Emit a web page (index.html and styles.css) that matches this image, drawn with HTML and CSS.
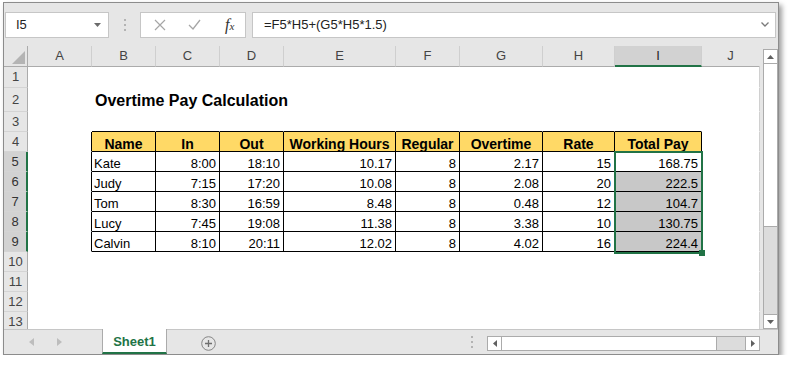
FILE: index.html
```html
<!DOCTYPE html>
<html>
	<head>
		<meta charset="utf-8">
		<title>Overtime Pay Calculation</title>
		<link rel="stylesheet" href="styles.css">
	</head>
	<body>
	<div class="window">
		<!-- 名称框 + 编辑栏 -->
		<div class="fbar">
			<div class="namebox">
				<span>I5</span>
				<svg class="caret" width="7" height="4" viewBox="0 0 7 4"><polygon points="0,0 7,0 3.5,4" fill="#6b6b6b"/></svg>
			</div>
			<div class="grip"><i></i><i></i><i></i></div>
			<div class="fbtns">
				<svg width="12" height="12" viewBox="0 0 12 12"><path d="M1 1 L11 11 M11 1 L1 11" stroke="#a6a6a6" stroke-width="1.2" fill="none"/></svg>
				<svg width="13" height="11" viewBox="0 0 13 11"><path d="M1 6 L5 10 L12 1" stroke="#a6a6a6" stroke-width="1.3" fill="none"/></svg>
				<span class="fx">f<small>x</small></span>
			</div>
			<div class="formula">
				<span>=F5*H5+(G5*H5*1.5)</span>
				<svg class="chev" width="8" height="5" viewBox="0 0 8 5"><path d="M0.5 0.5 L4 4 L7.5 0.5" stroke="#7a7a7a" stroke-width="1.3" fill="none"/></svg>
			</div>
		</div>

		<div class="main">
			<div class="sheet">
				<div class="row hdr">
					<div class="corner"><svg width="13" height="13" viewBox="0 0 13 13"><polygon points="13,0 13,13 0,13" fill="#b4b4b4"/></svg></div>
					<div>A</div><div>B</div><div>C</div><div>D</div><div>E</div><div>F</div><div>G</div><div>H</div><div class="on">I</div><div>J</div>
				</div>
				<div class="row r1"><div class="rh">1</div><div></div><div></div><div></div><div></div><div></div><div></div><div></div><div></div><div></div><div></div></div>
				<div class="row r2"><div class="rh">2</div><div></div><div class="title">Overtime Pay Calculation</div><div></div><div></div><div></div><div></div><div></div><div></div><div></div><div></div></div>
				<div class="row r3"><div class="rh">3</div><div></div><div></div><div></div><div></div><div></div><div></div><div></div><div></div><div></div><div></div></div>
				<div class="row tb head"><div class="rh">4</div><div></div><div>Name</div><div>In</div><div>Out</div><div>Working Hours</div><div>Regular</div><div>Overtime</div><div>Rate</div><div>Total Pay</div><div></div></div>
				<div class="row tb"><div class="rh on">5</div><div></div><div>Kate</div><div class="n">8:00</div><div class="n">18:10</div><div class="n">10.17</div><div class="n">8</div><div class="n">2.17</div><div class="n">15</div><div class="n">168.75</div><div></div></div>
				<div class="row tb"><div class="rh on">6</div><div></div><div>Judy</div><div class="n">7:15</div><div class="n">17:20</div><div class="n">10.08</div><div class="n">8</div><div class="n">2.08</div><div class="n">20</div><div class="n g">222.5</div><div></div></div>
				<div class="row tb"><div class="rh on">7</div><div></div><div>Tom</div><div class="n">8:30</div><div class="n">16:59</div><div class="n">8.48</div><div class="n">8</div><div class="n">0.48</div><div class="n">12</div><div class="n g">104.7</div><div></div></div>
				<div class="row tb"><div class="rh on">8</div><div></div><div>Lucy</div><div class="n">7:45</div><div class="n">19:08</div><div class="n">11.38</div><div class="n">8</div><div class="n">3.38</div><div class="n">10</div><div class="n g">130.75</div><div></div></div>
				<div class="row tb"><div class="rh on">9</div><div></div><div>Calvin</div><div class="n">8:10</div><div class="n">20:11</div><div class="n">12.02</div><div class="n">8</div><div class="n">4.02</div><div class="n">16</div><div class="n g">224.4</div><div></div></div>
				<div class="row"><div class="rh">10</div><div></div><div></div><div></div><div></div><div></div><div></div><div></div><div></div><div></div><div></div></div>
				<div class="row"><div class="rh">11</div><div></div><div></div><div></div><div></div><div></div><div></div><div></div><div></div><div></div><div></div></div>
				<div class="row"><div class="rh">12</div><div></div><div></div><div></div><div></div><div></div><div></div><div></div><div></div><div></div><div></div></div>
				<div class="row"><div class="rh">13</div><div></div><div></div><div></div><div></div><div></div><div></div><div></div><div></div><div></div><div></div></div>
				<!-- 选区 I5:I9 -->
				<div class="selbox"><span class="handle"></span></div>
			</div>
			<div class="vscroll">
				<div class="sbtn"><svg width="7" height="4" viewBox="0 0 7 4"><polygon points="0,4 7,4 3.5,0" fill="#606060"/></svg></div>
				<div class="vthumb"></div>
				<div class="track"></div>
				<div class="sbtn dn"><svg width="7" height="4" viewBox="0 0 7 4"><polygon points="0,0 7,0 3.5,4" fill="#606060"/></svg></div>
			</div>
		</div>

		<div class="tabbar">
			<div class="nav">
				<svg width="5" height="8" viewBox="0 0 5 8"><polygon points="5,0 5,8 0,4" fill="#bdbdbd"/></svg>
				<svg width="5" height="8" viewBox="0 0 5 8"><polygon points="0,0 0,8 5,4" fill="#bdbdbd"/></svg>
			</div>
			<div class="tab">Sheet1</div>
			<svg class="plus" width="15" height="15" viewBox="0 0 15 15"><circle cx="7.5" cy="7.5" r="6.8" stroke="#858585" fill="none"/><path d="M7.5 4 V11 M4 7.5 H11" stroke="#6e6e6e" stroke-width="1.3"/></svg>
			<div class="dots"><i></i><i></i><i></i></div>
			<div class="hscroll">
				<div class="sbtn"><svg width="4" height="7" viewBox="0 0 4 7"><polygon points="4,0 4,7 0,3.5" fill="#606060"/></svg></div>
				<div class="hthumb"></div>
				<div class="track"></div>
				<div class="sbtn rt"><svg width="4" height="7" viewBox="0 0 4 7"><polygon points="0,0 0,7 4,3.5" fill="#606060"/></svg></div>
			</div>
		</div>
	</div>
	</body>
</html>
```
FILE: styles.css
```css
*{ margin: 0; padding: 0; box-sizing: border-box; }
body{ background-color: #fff; font-family: "Liberation Sans", Arial, sans-serif; font-size: 13px; color: #000; }

.window{ box-sizing: content-box; width: 774px; height: 351px; margin: 2px 0 0 3px; border: 1px solid #8c8c8c; background-color: #e6e6e6; box-shadow: 3px 3px 5px rgba(0,0,0,.38); display: flex; flex-direction: column; }

/*编辑栏*/
.fbar{ height: 43px; display: flex; align-items: center; padding-left: 1px; }
.namebox{ width: 104px; height: 26px; background-color: #fff; border: 1px solid #c6c6c6; display: flex; align-items: center; padding: 0 7px 0 10px; color: #222; }
.namebox span{ flex: 1; }
.grip{ width: 31px; display: flex; flex-direction: column; align-items: center; gap: 3px; }
.grip i, .dots i{ display: block; width: 2px; height: 2px; background-color: #b3b3b3; }
.fbtns{ width: 106px; height: 26px; background-color: #fff; border: 1px solid #c6c6c6; display: flex; align-items: center; padding-left: 13px; gap: 22px; }
.fbtns .fx{ font-family: "Liberation Serif", serif; font-style: italic; font-size: 16px; color: #333; margin-left: 2px; }
.fbtns .fx small{ font-size: 11px; }
.formula{ flex: 1; height: 26px; margin: 0 2px 0 6px; background-color: #fff; border: 1px solid #c6c6c6; display: flex; align-items: center; padding: 0 6px 0 11px; color: #222; }
.formula span{ flex: 1; }

/*表格区*/
.main{ height: 283px; display: flex; }
.sheet{ width: 756px; background-color: #fff; overflow: hidden; position: relative; }
.row{ display: grid; grid-template-columns: 24px 64px 64px 64px 64px 112px 64px 83px 72px 87px 58px; height: 20px; }
.row.hdr, .row.r1{ height: 21px; }
.row.r2{ height: 24px; }
.row > div{ border-right: 1px solid transparent; border-bottom: 1px solid transparent; display: flex; align-items: flex-end; padding: 0 2px; line-height: 14px; white-space: nowrap; }
.row > div:last-child{ border-right-color: #d0d0d0; }

.row.hdr > div{ background-color: #e6e6e6; border-right-color: #cfcfcf; border-bottom-color: #ababab; justify-content: center; align-items: center; color: #444; }
.row.hdr > div:last-child{ border-right-color: transparent; }
.row.hdr > .corner{ border-right-color: #ababab; justify-content: flex-end; align-items: flex-end; padding: 0 2px 2px 0; }
.row.hdr > .on{ background-color: #d2d2d2; border-bottom: 2px solid #217346; color: #222; }

.row > .rh{ background-color: #e6e6e6; border-right-color: #ababab; border-bottom-color: #d4d4d4; justify-content: center; align-items: center; color: #444; padding: 0; }
.row > .rh.on{ background-color: #d2d2d2; border-right: 2px solid #217346; color: #333; }

.row > .title{ font-size: 16px; font-weight: bold; align-items: center; padding: 2px 0 0 3px; overflow: visible; }

/*表格边框*/
.row.r3 > div:nth-child(n+3):nth-child(-n+10){ border-bottom-color: #000; }
.row.tb > div:nth-child(n+2):nth-child(-n+10){ border-right-color: #000; }
.row.tb > div:nth-child(n+3):nth-child(-n+10){ border-bottom-color: #000; }
.row.head > div:nth-child(n+3):nth-child(-n+10){ background-color: #ffd966; font-weight: bold; font-size: 14px; justify-content: center; }
.row > .n{ justify-content: flex-end; padding-right: 3px; }
.row > .g{ background-color: #c8c8c8; }

.selbox{ position: absolute; left: 610px; top: 105px; width: 89px; height: 103px; border: 2px solid #217346; }
.selbox .handle{ position: absolute; right: -4px; bottom: -4px; width: 6px; height: 6px; background-color: #217346; }

/*滚动条*/
.vscroll{ width: 15px; margin: 3px 0 0 3px; border: 1px solid #ababab; display: flex; flex-direction: column; background-color: #dcdcdc; }
.sbtn{ background-color: #fff; display: flex; align-items: center; justify-content: center; }
.vscroll .sbtn{ height: 14px; border-bottom: 1px solid #ababab; }
.vscroll .sbtn.dn{ border-bottom: 0; border-top: 1px solid #ababab; }
.vthumb{ height: 163px; background-color: #fff; border-bottom: 1px solid #ababab; }
.track{ flex: 1; }

/*工作表标签*/
.tabbar{ height: 25px; border-top: 1px solid #c6c6c6; display: flex; align-items: flex-start; }
.nav{ width: 98px; height: 24px; display: flex; align-items: center; padding-left: 25px; gap: 23px; }
.tab{ width: 65px; height: 25px; margin-top: -1px; background-color: #fff; border: 1px solid #ababab; border-top: 0; border-bottom: 2px solid #217346; color: #217346; font-weight: bold; display: flex; align-items: center; justify-content: center; padding-top: 1px; }
.plus{ margin: 6px 0 0 34px; }
.dots{ display: flex; flex-direction: column; gap: 3px; margin: 6px 0 0 auto; }
.hscroll{ width: 273px; height: 15px; margin: 6px 18px 0 14px; border: 1px solid #ababab; display: flex; background-color: #dcdcdc; }
.hscroll .sbtn{ width: 14px; border-right: 1px solid #ababab; }
.hscroll .sbtn.rt{ border-right: 0; border-left: 1px solid #ababab; }
.hthumb{ width: 215px; background-color: #fff; border-right: 1px solid #ababab; }
```
